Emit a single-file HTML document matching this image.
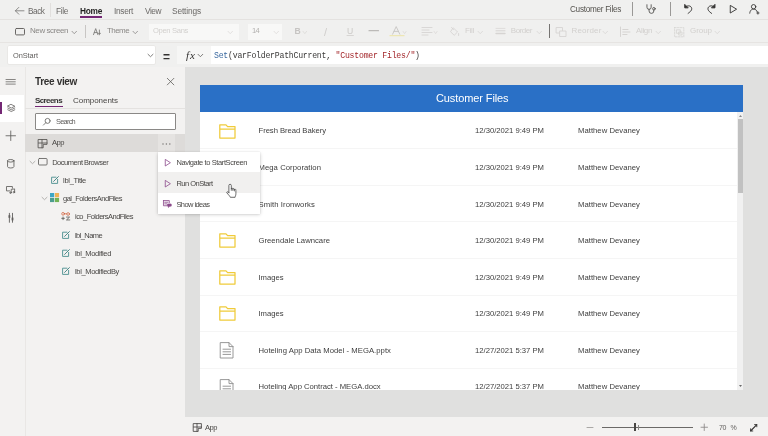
<!DOCTYPE html>
<html lang="en"><head><meta charset="utf-8"><title>Power Apps - Customer Files</title>
<style>
html,body{margin:0;padding:0}
body{width:768px;height:436px;overflow:hidden;position:relative;background:#f3f2f1;filter:opacity(1);font-family:"Liberation Sans",sans-serif}
.t{position:absolute;white-space:pre;line-height:14px;height:14px}
.b{position:absolute}
svg{position:absolute;overflow:visible}
#canvas{position:absolute;left:200.3px;top:84.6px;width:543.2px;height:305px;background:#fff;overflow:hidden}
</style></head><body>
<div class="b" style="left:0px;top:0px;width:768.00px;height:66.60px;background:#f0f0ef;"></div><div class="b" style="left:0px;top:19px;width:768.00px;height:1.00px;background:#e4e2e0;"></div><div class="b" style="left:0px;top:42px;width:768.00px;height:1.00px;background:#e6e4e2;"></div><div class="b" style="left:80px;top:16.2px;width:22.20px;height:1.70px;background:#742774;"></div><div class="b" style="left:50px;top:3px;width:1.00px;height:14.00px;background:#e1dfdd;"></div><div class="b" style="left:84.5px;top:24.5px;width:1.00px;height:13.00px;background:#c8c6c4;"></div><div class="b" style="left:549px;top:23.8px;width:0.90px;height:14.50px;background:#767472;"></div><div class="b" style="left:632.3px;top:2px;width:0.90px;height:14.00px;background:#9a9896;"></div><div class="b" style="left:669.7px;top:2px;width:0.90px;height:14.00px;background:#9a9896;"></div><div class="b" style="left:149px;top:24px;width:90.00px;height:15.50px;background:#f8f8f7;"></div><div class="b" style="left:248px;top:24px;width:33.50px;height:15.50px;background:#f8f8f7;"></div><div class="b" style="left:8px;top:46.2px;width:147.00px;height:17.40px;background:#ffffff;border-radius:1px;box-shadow:0 0 0 .5px #e1dfdd"></div><div class="b" style="left:176.5px;top:46.2px;width:34.00px;height:17.40px;background:#f6f6f5;"></div><div class="b" style="left:210.8px;top:46.2px;width:557.20px;height:17.40px;background:#ffffff;"></div><div class="b" style="left:0px;top:66.6px;width:768.00px;height:369.40px;background:#e0e0df;"></div><div class="b" style="left:0px;top:66.6px;width:25.40px;height:369.40px;background:#f3f2f1;"></div><div class="b" style="left:25.4px;top:66.6px;width:0.80px;height:369.40px;background:#e9e7e5;"></div><div class="b" style="left:26.2px;top:66.6px;width:159.10px;height:369.40px;background:#f3f2f1;"></div><div class="b" style="left:0px;top:95px;width:24.30px;height:26.70px;background:#ffffff;"></div><div class="b" style="left:0px;top:101.8px;width:1.90px;height:12.20px;background:#742774;"></div><div class="b" style="left:35px;top:105.6px;width:28.00px;height:1.80px;background:#742774;"></div><div class="b" style="left:25.3px;top:107.7px;width:160.00px;height:0.80px;background:#e4e2e0;"></div><div class="b" style="left:34.6px;top:112.9px;width:141.10px;height:16.90px;background:#ffffff;box-sizing:border-box;border:1px solid #8a8886;border-radius:1px"></div><div class="b" style="left:25.3px;top:134.2px;width:160.00px;height:17.80px;background:#dddbd9;"></div><div class="b" style="left:158.3px;top:134.2px;width:17.00px;height:17.80px;background:#e5e3e1;"></div><div class="b" style="left:185.3px;top:417px;width:582.70px;height:19.00px;background:#f3f2f1;"></div><div class="b" style="left:602px;top:427px;width:91.00px;height:1.00px;background:#6b6967;"></div><div class="b" style="left:634.4px;top:423.4px;width:2.10px;height:7.40px;background:#484644;"></div><div class="b" style="left:637.6px;top:425.2px;width:0.80px;height:4.40px;background:#8a8886;"></div><span class="t" style='left:28.00px;top:3.80px;font-size:8.3px;color:#6b6967;letter-spacing:-0.488px;'>Back</span><span class="t" style='left:56.00px;top:3.80px;font-size:8.3px;color:#6b6967;letter-spacing:-0.344px;'>File</span><span class="t" style='left:80.00px;top:3.80px;font-size:8.3px;color:#201f1e;letter-spacing:-0.266px;font-weight:700;'>Home</span><span class="t" style='left:114.00px;top:3.80px;font-size:8.3px;color:#6b6967;letter-spacing:-0.294px;'>Insert</span><span class="t" style='left:145.00px;top:3.80px;font-size:8.3px;color:#6b6967;letter-spacing:-0.461px;'>View</span><span class="t" style='left:172.00px;top:3.80px;font-size:8.3px;color:#6b6967;letter-spacing:-0.123px;'>Settings</span><span class="t" style='left:570.00px;top:3.30px;font-size:8.2px;color:#55534f;letter-spacing:-0.290px;'>Customer Files</span><span class="t" style='left:30.00px;top:24.20px;font-size:8px;color:#8a8886;letter-spacing:-0.425px;'>New screen</span><span class="t" style='left:107.00px;top:24.20px;font-size:8px;color:#8a8886;letter-spacing:-0.581px;'>Theme</span><span class="t" style='left:153.00px;top:24.30px;font-size:7.6px;color:#d2d0ce;letter-spacing:-0.333px;'>Open Sans</span><span class="t" style='left:252.00px;top:24.30px;font-size:7.6px;color:#b3b1af;letter-spacing:-0.727px;'>14</span><span class="t" style='left:294.60px;top:24.30px;font-size:8.6px;color:#c6c4c2;letter-spacing:-0.219px;font-weight:700;'>B</span><span class="t" style='left:324.00px;top:24.50px;font-size:11px;color:#d0cecc;letter-spacing:1.538px;'>/</span><span class="t" style='left:347.00px;top:23.70px;font-size:8.6px;color:#cbc9c7;letter-spacing:-0.019px;'>U</span><span class="t" style='left:465.00px;top:24.20px;font-size:8px;color:#d2d0ce;letter-spacing:-0.305px;'>Fill</span><span class="t" style='left:510.80px;top:24.20px;font-size:8px;color:#d2d0ce;letter-spacing:-0.469px;'>Border</span><span class="t" style='left:571.50px;top:24.20px;font-size:8px;color:#d2d0ce;letter-spacing:0.156px;'>Reorder</span><span class="t" style='left:636.00px;top:24.20px;font-size:8px;color:#d2d0ce;letter-spacing:-0.359px;'>Align</span><span class="t" style='left:690.00px;top:24.20px;font-size:8px;color:#d2d0ce;letter-spacing:-0.047px;'>Group</span><span class="t" style='left:13.00px;top:49.00px;font-size:7.4px;color:#605e5c;letter-spacing:-0.067px;'>OnStart</span><span class="t" style='left:163.00px;top:49.60px;font-size:12px;color:#323130;letter-spacing:0.484px;font-weight:700;'>=</span><span class="t" style='left:186.00px;top:48.00px;font-size:11px;color:#323130;letter-spacing:1.023px;font-family:"Liberation Serif", serif;font-style:italic;'>fx</span><span class="t" style='left:35.00px;top:74.50px;font-size:10px;color:#323130;letter-spacing:-0.337px;font-weight:700;'>Tree view</span><span class="t" style='left:35.00px;top:93.50px;font-size:8px;color:#323130;letter-spacing:-0.592px;font-weight:700;'>Screens</span><span class="t" style='left:73.00px;top:93.50px;font-size:8px;color:#484644;letter-spacing:-0.036px;'>Components</span><span class="t" style='left:56.00px;top:114.50px;font-size:7.4px;color:#605e5c;letter-spacing:-0.737px;'>Search</span><span class="t" style='left:52.00px;top:136.30px;font-size:7.6px;color:#484644;letter-spacing:-0.505px;'>App</span><span class="t" style='left:52.20px;top:155.70px;font-size:7.5px;color:#484644;letter-spacing:-0.486px;'>Document Browser</span><span class="t" style='left:63.00px;top:173.50px;font-size:7.5px;color:#484644;letter-spacing:-0.286px;'>lbl_Title</span><span class="t" style='left:63.00px;top:191.50px;font-size:7.5px;color:#484644;letter-spacing:-0.493px;'>gal_FoldersAndFiles</span><span class="t" style='left:75.00px;top:210.40px;font-size:7.5px;color:#484644;letter-spacing:-0.524px;'>ico_FoldersAndFiles</span><span class="t" style='left:75.00px;top:228.50px;font-size:7.5px;color:#484644;letter-spacing:-0.586px;'>lbl_Name</span><span class="t" style='left:75.00px;top:246.50px;font-size:7.5px;color:#484644;letter-spacing:-0.336px;'>lbl_Modified</span><span class="t" style='left:75.00px;top:264.80px;font-size:7.5px;color:#484644;letter-spacing:-0.342px;'>lbl_ModifiedBy</span><span class="t" style='left:205.00px;top:421.00px;font-size:7.5px;color:#484644;letter-spacing:-0.453px;'>App</span><span class="t" style='left:719.00px;top:420.50px;font-size:7px;color:#605e5c;letter-spacing:-0.398px;'>70</span><span class="t" style='left:730.50px;top:420.50px;font-size:7px;color:#605e5c;letter-spacing:-0.734px;'>%</span><svg style="left:14.6px;top:7px" width="9.2" height="7.6" viewBox="0 0 9.2 7.6" fill="none" stroke="#7a7876" stroke-width="0.85" stroke-linecap="round" stroke-linejoin="round"><path d="M3.8 0.4 L0.4 3.8 L3.8 7.2 M0.4 3.8 H9"/></svg><svg style="left:15px;top:28px" width="10" height="7.4" viewBox="0 0 10 7.4" fill="none" stroke="#605e5c" stroke-width="0.95" stroke-linecap="round" stroke-linejoin="round"><rect x="0.5" y="0.5" width="9" height="6.4" rx="1"/></svg><svg style="left:72px;top:30.5px" width="4.5" height="3" viewBox="0 0 4.5 3" fill="none" stroke="#8a8886" stroke-width="0.8" stroke-linecap="round" stroke-linejoin="round"><path d="M0 0.3 L2.25 2.7 L4.5 0.3"/></svg><svg style="left:93px;top:27.6px" width="7.6" height="7.2" viewBox="0 0 7.6 7.2" fill="none" stroke="#7a7876" stroke-width="0.85" stroke-linecap="round" stroke-linejoin="round"><path d="M0.5 6.7 L2.7 0.6 L4.9 6.7 M1.3 4.6 H4.1" /><path d="M6.4 2 V6.8 M5.5 5.4 h1.9" /></svg><svg style="left:133px;top:30.5px" width="4.5" height="3" viewBox="0 0 4.5 3" fill="none" stroke="#8a8886" stroke-width="0.8" stroke-linecap="round" stroke-linejoin="round"><path d="M0 0.3 L2.25 2.7 L4.5 0.3"/></svg><svg style="left:228px;top:30.5px" width="4.5" height="3" viewBox="0 0 4.5 3" fill="none" stroke="#dddbd9" stroke-width="0.8" stroke-linecap="round" stroke-linejoin="round"><path d="M0 0.3 L2.25 2.7 L4.5 0.3"/></svg><svg style="left:273.5px;top:30.5px" width="4.5" height="3" viewBox="0 0 4.5 3" fill="none" stroke="#dddbd9" stroke-width="0.8" stroke-linecap="round" stroke-linejoin="round"><path d="M0 0.3 L2.25 2.7 L4.5 0.3"/></svg><svg style="left:303px;top:30.5px" width="3.6" height="3" viewBox="0 0 3.6 3" fill="none" stroke="#dcdad8" stroke-width="0.8" stroke-linecap="round" stroke-linejoin="round"><path d="M0 0.3 L1.8 2.7 L3.6 0.3"/></svg><svg style="left:368.5px;top:30.4px" width="9.5" height="1.3" viewBox="0 0 9.5 1.3" fill="none" stroke="#bcbab8" stroke-width="1.2" stroke-linecap="round" stroke-linejoin="round"><path d="M0 0.65 H9.5"/></svg><svg style="left:347px;top:35.2px" width="6.4" height="1" viewBox="0 0 6.4 1" fill="none" stroke="#d0cecc" stroke-width="0.8" stroke-linecap="round" stroke-linejoin="round"><path d="M0 0.5 H6.4"/></svg><svg style="left:392.4px;top:25.8px" width="8.4" height="8.6" viewBox="0 0 8.4 8.6" fill="none" stroke="#c6c4c2" stroke-width="0.9" stroke-linecap="round" stroke-linejoin="round"><path d="M0.6 8.2 L4.2 0.6 L7.8 8.2 M2 5.4 H6.4"/></svg><svg style="left:390px;top:35px" width="14" height="1.5" viewBox="0 0 14 1.5" fill="none" stroke="#ede6b4" stroke-width="1.3" stroke-linecap="round" stroke-linejoin="round"><path d="M0 0.7 H14"/></svg><svg style="left:403px;top:31.0px" width="3.2" height="3" viewBox="0 0 3.2 3" fill="none" stroke="#dddbd9" stroke-width="0.8" stroke-linecap="round" stroke-linejoin="round"><path d="M0 0.3 L1.6 2.7 L3.2 0.3"/></svg><svg style="left:421.5px;top:27px" width="10" height="8.5" viewBox="0 0 10 8.5" fill="none" stroke="#d6d4d2" stroke-width="0.9" stroke-linecap="round" stroke-linejoin="round"><path d="M0 0.5 H10 M0 3 H7 M0 5.5 H10 M0 8 H6"/></svg><svg style="left:433.5px;top:30.5px" width="3.2" height="3" viewBox="0 0 3.2 3" fill="none" stroke="#dddbd9" stroke-width="0.8" stroke-linecap="round" stroke-linejoin="round"><path d="M0 0.3 L1.6 2.7 L3.2 0.3"/></svg><svg style="left:450px;top:26.5px" width="9.5" height="9.5" viewBox="0 0 9.5 9.5" fill="none" stroke="#d6d4d2" stroke-width="0.9" stroke-linecap="round" stroke-linejoin="round"><path d="M3.5 1 L7.5 5 L4.2 8.3 L0.8 5 Z M1.5 0.5 L3.5 2.5 M8.6 6.5 v2"/></svg><svg style="left:477.5px;top:30.5px" width="4.5" height="3" viewBox="0 0 4.5 3" fill="none" stroke="#d8d6d4" stroke-width="0.8" stroke-linecap="round" stroke-linejoin="round"><path d="M0 0.3 L2.25 2.7 L4.5 0.3"/></svg><svg style="left:495.6px;top:28px" width="9" height="6.4" viewBox="0 0 9 6.4" fill="none" stroke="#d6d4d2" stroke-width="1" stroke-linecap="round" stroke-linejoin="round"><path d="M0 0.4 H9" stroke-width="0.7"/><path d="M0 2.8 H9" stroke-width="1"/><path d="M0 5.5 H9" stroke-width="1.4"/></svg><svg style="left:536.5px;top:30.5px" width="4.5" height="3" viewBox="0 0 4.5 3" fill="none" stroke="#d8d6d4" stroke-width="0.8" stroke-linecap="round" stroke-linejoin="round"><path d="M0 0.3 L2.25 2.7 L4.5 0.3"/></svg><svg style="left:556px;top:27px" width="10.5" height="10" viewBox="0 0 10.5 10" fill="none" stroke="#d6d4d2" stroke-width="0.9" stroke-linecap="round" stroke-linejoin="round"><rect x="0.5" y="0.5" width="6" height="5.5"/><rect x="4" y="4" width="6" height="5.5" fill="#f0f0ef"/></svg><svg style="left:603px;top:30.5px" width="4.5" height="3" viewBox="0 0 4.5 3" fill="none" stroke="#d8d6d4" stroke-width="0.8" stroke-linecap="round" stroke-linejoin="round"><path d="M0 0.3 L2.25 2.7 L4.5 0.3"/></svg><svg style="left:619.5px;top:27px" width="10.5" height="9.5" viewBox="0 0 10.5 9.5" fill="none" stroke="#d6d4d2" stroke-width="1" stroke-linecap="round" stroke-linejoin="round"><path d="M0.5 0 V9.5 M2.8 2.5 H8 M2.8 5 H10 M2.8 7.5 H7"/></svg><svg style="left:655.5px;top:30.5px" width="4.5" height="3" viewBox="0 0 4.5 3" fill="none" stroke="#d8d6d4" stroke-width="0.8" stroke-linecap="round" stroke-linejoin="round"><path d="M0 0.3 L2.25 2.7 L4.5 0.3"/></svg><svg style="left:674px;top:26.5px" width="10.5" height="10.5" viewBox="0 0 10.5 10.5" fill="none" stroke="#d6d4d2" stroke-width="0.8" stroke-linecap="round" stroke-linejoin="round"><rect x="0.6" y="0.6" width="9.2" height="9.2" stroke-dasharray="1.6 1.2"/><rect x="2.8" y="2.8" width="3.5" height="3.5"/><rect x="5" y="5" width="3" height="3"/></svg><svg style="left:714.5px;top:30.5px" width="4.5" height="3" viewBox="0 0 4.5 3" fill="none" stroke="#d8d6d4" stroke-width="0.8" stroke-linecap="round" stroke-linejoin="round"><path d="M0 0.3 L2.25 2.7 L4.5 0.3"/></svg><svg style="left:645.5px;top:4px" width="10.6" height="10.1" viewBox="0 0 11.5 11" fill="none" stroke="#484644" stroke-width="0.9" stroke-linecap="round" stroke-linejoin="round"><path d="M1 0.8 V3.5 a2.3 2.3 0 0 0 4.6 0 V0.8 M3.3 5.9 V7.6 a2.6 2.6 0 0 0 5.2 0 V6.6"/><circle cx="8.6" cy="5.2" r="1.4"/></svg><svg style="left:683.5px;top:4px" width="8.7" height="10.1" viewBox="0 0 9.5 11" fill="none" stroke="#323130" stroke-width="1.05" stroke-linecap="round" stroke-linejoin="round"><path d="M0.8 0.8 V4.2 H4.2 Z" fill="#323130"/><path d="M1.6 3.4 C3.4 1.4 7 1.4 8.2 4 C9.2 6.5 7 8.5 4.5 10.2"/></svg><svg style="left:706.8px;top:4px" width="8.7" height="10.1" viewBox="0 0 9.5 11" fill="none" stroke="#323130" stroke-width="1.05" stroke-linecap="round" stroke-linejoin="round"><path d="M8.7 0.8 V4.2 H5.3 Z" fill="#323130"/><path d="M7.9 3.4 C6.1 1.4 2.5 1.4 1.3 4 C0.3 6.5 2.5 8.5 5 10.2"/></svg><svg style="left:729.5px;top:4.8px" width="7.2" height="8.4" viewBox="0 0 7.5 8.8" fill="none" stroke="#323130" stroke-width="0.95" stroke-linecap="round" stroke-linejoin="round"><path d="M0.6 0.6 L6.9 4.4 L0.6 8.2 Z"/></svg><svg style="left:749px;top:4px" width="10.6" height="10.1" viewBox="0 0 11.5 11" fill="none" stroke="#323130" stroke-width="0.95" stroke-linecap="round" stroke-linejoin="round"><circle cx="5" cy="3" r="2.4"/><path d="M0.8 10 C1.2 6.5 3 5.6 5 5.6 C7 5.6 8.3 6.6 8.9 8.4 M9.7 8.6 v2.4 M8.5 9.8 h2.4"/></svg><svg style="left:148px;top:54.1px" width="5" height="3" viewBox="0 0 5 3" fill="none" stroke="#605e5c" stroke-width="0.8" stroke-linecap="round" stroke-linejoin="round"><path d="M0 0.3 L2.5 2.7 L5 0.3"/></svg><svg style="left:198.3px;top:53.7px" width="4.8" height="3" viewBox="0 0 4.8 3" fill="none" stroke="#605e5c" stroke-width="0.8" stroke-linecap="round" stroke-linejoin="round"><path d="M0 0.3 L2.4 2.7 L4.8 0.3"/></svg><svg style="left:6.3px;top:79px" width="9.3" height="5.6" viewBox="0 0 9.3 5.6" fill="none" stroke="#605e5c" stroke-width="0.75" stroke-linecap="round" stroke-linejoin="round"><path d="M0 0.5 H9.3 M0 2.8 H9.3 M0 5.1 H9.3"/></svg><svg style="left:6.6px;top:104.3px" width="8.6" height="8" viewBox="0 0 10 10" fill="none" stroke="#484644" stroke-width="0.85" stroke-linecap="round" stroke-linejoin="round"><path d="M5 0.6 L9.4 2.8 L5 5 L0.6 2.8 Z M0.6 5 L5 7.2 L9.4 5 M0.6 7.2 L5 9.4 L9.4 7.2"/></svg><svg style="left:6px;top:130.5px" width="9.5" height="9.5" viewBox="0 0 9.5 9.5" fill="none" stroke="#605e5c" stroke-width="0.85" stroke-linecap="round" stroke-linejoin="round"><path d="M4.75 0 V9.5 M0 4.75 H9.5"/></svg><svg style="left:7px;top:158.5px" width="7.5" height="9.5" viewBox="0 0 7.5 9.5" fill="none" stroke="#605e5c" stroke-width="0.85" stroke-linecap="round" stroke-linejoin="round"><ellipse cx="3.75" cy="1.8" rx="3.2" ry="1.3"/><path d="M0.55 1.8 V7.6 a3.2 1.4 0 0 0 6.4 0 V1.8"/></svg><svg style="left:6.2px;top:186.2px" width="9.6" height="8" viewBox="0 0 9.6 8" fill="none" stroke="#605e5c" stroke-width="0.85" stroke-linecap="round" stroke-linejoin="round"><path d="M3.6 4.9 H0.5 V0.5 H6.4 V2.2"/><path d="M5.2 6.6 V3.4 L8.6 2.9 V6.1"/><circle cx="4.5" cy="6.7" r="0.75"/><circle cx="7.9" cy="6.2" r="0.75"/></svg><svg style="left:8px;top:212.6px" width="6" height="9.6" viewBox="0 0 6 9.6" fill="none" stroke="#605e5c" stroke-width="0.85" stroke-linecap="round" stroke-linejoin="round"><path d="M1.4 0.3 V9.3 M4.5 0.3 V9.3" stroke-width="0.9"/><rect x="0.5" y="2.2" width="1.8" height="2.6" fill="#605e5c" stroke="none"/><rect x="3.6" y="4.6" width="1.8" height="2.8" fill="#605e5c" stroke="none"/></svg><svg style="left:166.8px;top:78.3px" width="7.2" height="7.2" viewBox="0 0 7.2 7.2" fill="none" stroke="#605e5c" stroke-width="0.8" stroke-linecap="round" stroke-linejoin="round"><path d="M0.3 0.3 L6.9 6.9 M6.9 0.3 L0.3 6.9"/></svg><svg style="left:43px;top:118.2px" width="7.5" height="7.5" viewBox="0 0 7.5 7.5" fill="none" stroke="#605e5c" stroke-width="0.8" stroke-linecap="round" stroke-linejoin="round"><circle cx="4.6" cy="2.9" r="2.5"/><path d="M2.8 4.7 L0.4 7.1"/></svg><svg style="left:162.3px;top:142.6px" width="9" height="2" viewBox="0 0 9 2" fill="#7a7876" stroke="none" stroke-width="1" stroke-linecap="round" stroke-linejoin="round"><circle cx="1" cy="1" r="0.75"/><circle cx="4.4" cy="1" r="0.75"/><circle cx="7.8" cy="1" r="0.75"/></svg><svg style="left:38px;top:139px" width="9.5" height="9.5" viewBox="0 0 9.5 9.5" fill="none" stroke="#565452" stroke-width="0.85" stroke-linecap="round" stroke-linejoin="round"><path d="M0.5 0.5 H9 V5.4 H5.2 V8.8 H0.5 Z M0.5 4 H9 M4 0.5 V8.8"/></svg><svg style="left:30px;top:160.5px" width="5" height="3" viewBox="0 0 5 3" fill="none" stroke="#a19f9d" stroke-width="0.8" stroke-linecap="round" stroke-linejoin="round"><path d="M0 0.3 L2.5 2.7 L5 0.3"/></svg><svg style="left:38px;top:158.2px" width="9.6" height="7.6" viewBox="0 0 9.6 7.6" fill="none" stroke="#605e5c" stroke-width="0.85" stroke-linecap="round" stroke-linejoin="round"><rect x="0.5" y="0.5" width="8.6" height="6.5" rx="1"/></svg><svg style="left:41.5px;top:196.9px" width="5" height="3" viewBox="0 0 5 3" fill="none" stroke="#a19f9d" stroke-width="0.8" stroke-linecap="round" stroke-linejoin="round"><path d="M0 0.3 L2.5 2.7 L5 0.3"/></svg><svg style="left:50.8px;top:176.3px" width="8" height="8" viewBox="0 0 8 8" fill="none" stroke="#605e5c" stroke-width="0.9" stroke-linecap="round" stroke-linejoin="round"><path d="M5 1.2 H0.6 V7.4 H6.6 V3.4" stroke="#4a8f8f"/><path d="M2.6 5.4 L7.4 0.6" stroke="#3b7d7d"/></svg><svg style="left:61.8px;top:231px" width="8" height="8" viewBox="0 0 8 8" fill="none" stroke="#605e5c" stroke-width="0.9" stroke-linecap="round" stroke-linejoin="round"><path d="M5 1.2 H0.6 V7.4 H6.6 V3.4" stroke="#4a8f8f"/><path d="M2.6 5.4 L7.4 0.6" stroke="#3b7d7d"/></svg><svg style="left:61.8px;top:249.2px" width="8" height="8" viewBox="0 0 8 8" fill="none" stroke="#605e5c" stroke-width="0.9" stroke-linecap="round" stroke-linejoin="round"><path d="M5 1.2 H0.6 V7.4 H6.6 V3.4" stroke="#4a8f8f"/><path d="M2.6 5.4 L7.4 0.6" stroke="#3b7d7d"/></svg><svg style="left:61.8px;top:267.4px" width="8" height="8" viewBox="0 0 8 8" fill="none" stroke="#605e5c" stroke-width="0.9" stroke-linecap="round" stroke-linejoin="round"><path d="M5 1.2 H0.6 V7.4 H6.6 V3.4" stroke="#4a8f8f"/><path d="M2.6 5.4 L7.4 0.6" stroke="#3b7d7d"/></svg><svg style="left:49.8px;top:193.2px" width="9.2" height="9.2" viewBox="0 0 9.2 9.2" fill="none" stroke="none" stroke-width="1" stroke-linecap="round" stroke-linejoin="round"><rect x="0" y="0" width="4.2" height="4.2" fill="#3fa7c4"/><rect x="4.9" y="0" width="4.2" height="4.2" fill="#f0b355"/><rect x="0" y="4.9" width="4.2" height="4.2" fill="#4d9d8e"/><rect x="4.9" y="4.9" width="4.2" height="4.2" fill="#72b356"/></svg><svg style="left:61px;top:212.2px" width="10" height="8.6" viewBox="0 0 10.5 9.5" fill="none" stroke="#605e5c" stroke-width="0.8" stroke-linecap="round" stroke-linejoin="round"><circle cx="2" cy="2" r="1.5" stroke="#d0603a"/><circle cx="7.6" cy="2.2" r="1.5" stroke="#d0603a"/><path d="M3.5 2 H6" stroke="#d0603a"/><path d="M0.5 7 h3 M2 5.5 v3" stroke="#484644"/><path d="M5.8 5.6 h3.4 l-3.4 3.2 h3.6" stroke="#484644"/></svg><svg style="left:192.5px;top:423px" width="9" height="9" viewBox="0 0 9 9" fill="none" stroke="#484644" stroke-width="0.85" stroke-linecap="round" stroke-linejoin="round"><path d="M0.6 0.6 H8.4 V5.4 H5.2 V8.4 H0.6 Z M0.6 4 H8.4 M4 0.6 V8.4"/></svg><svg style="left:587px;top:427px" width="6" height="1" viewBox="0 0 6 1" fill="none" stroke="#a19f9d" stroke-width="0.9" stroke-linecap="round" stroke-linejoin="round"><path d="M0 0.5 H6"/></svg><svg style="left:700.5px;top:424.3px" width="6.5" height="6.5" viewBox="0 0 6.5 6.5" fill="none" stroke="#8a8886" stroke-width="0.85" stroke-linecap="round" stroke-linejoin="round"><path d="M3.25 0 V6.5 M0 3.25 H6.5"/></svg><svg style="left:749.6px;top:423.8px" width="7.4" height="7.6" viewBox="0 0 7.4 7.6" fill="none" stroke="#323130" stroke-width="0.9" stroke-linecap="round" stroke-linejoin="round"><path d="M0.6 7 L6.8 0.6" stroke-width="1.1"/><path d="M4.6 0.6 H6.8 V2.8 M0.6 4.8 V7 H2.8"/></svg><div id="canvas"><div class="b" style="left:0;top:0;width:544px;height:27.5px;background:#2a70c6"></div><div class="b" style="left:537px;top:27.5px;width:6.2px;height:278px;background:#f1f1f1"></div><div class="b" style="left:537.9px;top:34.4px;width:4.5px;height:74px;background:#c1c1c1"></div><svg style="left:538.7px;top:30.2px" width="3" height="2" viewBox="0 0 3 2"><path d="M0 2 L1.5 0 L3 2 Z" fill="#8a8a8a"/></svg><svg style="left:538.7px;top:300.6px" width="3" height="2" viewBox="0 0 3 2"><path d="M0 0 L1.5 2 L3 0 Z" fill="#6a6a6a"/></svg><span class="t" style='left:235.70px;top:6.90px;font-size:11px;color:#ffffff;letter-spacing:-0.105px;'>Customer Files</span><span class="t" style='left:58.20px;top:39.88px;font-size:7.7px;color:#3d3d3d;letter-spacing:-0.049px;'>Fresh Bread Bakery</span><span class="t" style='left:274.70px;top:39.88px;font-size:7.7px;color:#3d3d3d;letter-spacing:-0.014px;'>12/30/2021 9:49 PM</span><span class="t" style='left:377.70px;top:39.88px;font-size:7.7px;color:#3d3d3d;letter-spacing:0.031px;'>Matthew Devaney</span><span class="t" style='left:58.20px;top:76.43px;font-size:7.7px;color:#3d3d3d;letter-spacing:0.060px;'>Mega Corporation</span><span class="t" style='left:274.70px;top:76.43px;font-size:7.7px;color:#3d3d3d;letter-spacing:-0.014px;'>12/30/2021 9:49 PM</span><span class="t" style='left:377.70px;top:76.43px;font-size:7.7px;color:#3d3d3d;letter-spacing:0.031px;'>Matthew Devaney</span><span class="t" style='left:58.20px;top:112.97px;font-size:7.7px;color:#3d3d3d;letter-spacing:0.093px;'>Smith Ironworks</span><span class="t" style='left:274.70px;top:112.97px;font-size:7.7px;color:#3d3d3d;letter-spacing:-0.014px;'>12/30/2021 9:49 PM</span><span class="t" style='left:377.70px;top:112.97px;font-size:7.7px;color:#3d3d3d;letter-spacing:0.031px;'>Matthew Devaney</span><span class="t" style='left:58.20px;top:149.53px;font-size:7.7px;color:#3d3d3d;letter-spacing:0.007px;'>Greendale Lawncare</span><span class="t" style='left:274.70px;top:149.53px;font-size:7.7px;color:#3d3d3d;letter-spacing:-0.014px;'>12/30/2021 9:49 PM</span><span class="t" style='left:377.70px;top:149.53px;font-size:7.7px;color:#3d3d3d;letter-spacing:0.031px;'>Matthew Devaney</span><span class="t" style='left:58.20px;top:186.08px;font-size:7.7px;color:#3d3d3d;letter-spacing:-0.036px;'>Images</span><span class="t" style='left:274.70px;top:186.08px;font-size:7.7px;color:#3d3d3d;letter-spacing:-0.014px;'>12/30/2021 9:49 PM</span><span class="t" style='left:377.70px;top:186.08px;font-size:7.7px;color:#3d3d3d;letter-spacing:0.031px;'>Matthew Devaney</span><span class="t" style='left:58.20px;top:222.62px;font-size:7.7px;color:#3d3d3d;letter-spacing:-0.036px;'>Images</span><span class="t" style='left:274.70px;top:222.62px;font-size:7.7px;color:#3d3d3d;letter-spacing:-0.014px;'>12/30/2021 9:49 PM</span><span class="t" style='left:377.70px;top:222.62px;font-size:7.7px;color:#3d3d3d;letter-spacing:0.031px;'>Matthew Devaney</span><span class="t" style='left:58.20px;top:259.17px;font-size:7.7px;color:#3d3d3d;letter-spacing:0.037px;'>Hoteling App Data Model - MEGA.pptx</span><span class="t" style='left:274.70px;top:259.17px;font-size:7.7px;color:#3d3d3d;letter-spacing:-0.014px;'>12/27/2021 5:37 PM</span><span class="t" style='left:377.70px;top:259.17px;font-size:7.7px;color:#3d3d3d;letter-spacing:0.031px;'>Matthew Devaney</span><span class="t" style='left:58.20px;top:295.73px;font-size:7.7px;color:#3d3d3d;letter-spacing:-0.016px;'>Hoteling App Contract - MEGA.docx</span><span class="t" style='left:274.70px;top:295.73px;font-size:7.7px;color:#3d3d3d;letter-spacing:-0.014px;'>12/27/2021 5:37 PM</span><span class="t" style='left:377.70px;top:295.73px;font-size:7.7px;color:#3d3d3d;letter-spacing:0.031px;'>Matthew Devaney</span><svg style="left:19px;top:38.97500000000001px" width="17" height="15" viewBox="0 0 17 15" fill="none" stroke="#f0cb3a" stroke-width="1.25" stroke-linecap="round" stroke-linejoin="round"><path d="M0.8 14 V0.8 H7 L8.6 2.6 H16 V14 Z M0.8 5 H16"/></svg><div class="b" style="left:0;top:63.75px;width:537px;height:0.8px;background:#f5f5f5"></div><svg style="left:19px;top:75.525px" width="17" height="15" viewBox="0 0 17 15" fill="none" stroke="#f0cb3a" stroke-width="1.25" stroke-linecap="round" stroke-linejoin="round"><path d="M0.8 14 V0.8 H7 L8.6 2.6 H16 V14 Z M0.8 5 H16"/></svg><div class="b" style="left:0;top:100.30px;width:537px;height:0.8px;background:#f5f5f5"></div><svg style="left:19px;top:112.07499999999999px" width="17" height="15" viewBox="0 0 17 15" fill="none" stroke="#f0cb3a" stroke-width="1.25" stroke-linecap="round" stroke-linejoin="round"><path d="M0.8 14 V0.8 H7 L8.6 2.6 H16 V14 Z M0.8 5 H16"/></svg><div class="b" style="left:0;top:136.85px;width:537px;height:0.8px;background:#f5f5f5"></div><svg style="left:19px;top:148.625px" width="17" height="15" viewBox="0 0 17 15" fill="none" stroke="#f0cb3a" stroke-width="1.25" stroke-linecap="round" stroke-linejoin="round"><path d="M0.8 14 V0.8 H7 L8.6 2.6 H16 V14 Z M0.8 5 H16"/></svg><div class="b" style="left:0;top:173.40px;width:537px;height:0.8px;background:#f5f5f5"></div><svg style="left:19px;top:185.175px" width="17" height="15" viewBox="0 0 17 15" fill="none" stroke="#f0cb3a" stroke-width="1.25" stroke-linecap="round" stroke-linejoin="round"><path d="M0.8 14 V0.8 H7 L8.6 2.6 H16 V14 Z M0.8 5 H16"/></svg><div class="b" style="left:0;top:209.95px;width:537px;height:0.8px;background:#f5f5f5"></div><svg style="left:19px;top:221.72500000000002px" width="17" height="15" viewBox="0 0 17 15" fill="none" stroke="#f0cb3a" stroke-width="1.25" stroke-linecap="round" stroke-linejoin="round"><path d="M0.8 14 V0.8 H7 L8.6 2.6 H16 V14 Z M0.8 5 H16"/></svg><div class="b" style="left:0;top:246.50px;width:537px;height:0.8px;background:#f5f5f5"></div><svg style="left:19.9px;top:257.57499999999993px" width="14" height="17" viewBox="0 0 14 17" fill="none" stroke="#8c8c8c" stroke-width="0.9" stroke-linecap="round" stroke-linejoin="round"><path d="M0.6 0.6 H9 L13 4.6 V16 H0.6 Z M9 0.6 V4.6 H13 M3 7.2 H10.6 M3 9.8 H10.6 M3 12.4 H10.6"/></svg><div class="b" style="left:0;top:283.05px;width:537px;height:0.8px;background:#f5f5f5"></div><svg style="left:19.9px;top:294.12499999999994px" width="14" height="17" viewBox="0 0 14 17" fill="none" stroke="#8c8c8c" stroke-width="0.9" stroke-linecap="round" stroke-linejoin="round"><path d="M0.6 0.6 H9 L13 4.6 V16 H0.6 Z M9 0.6 V4.6 H13 M3 7.2 H10.6 M3 9.8 H10.6 M3 12.4 H10.6"/></svg></div><div class="b" style="left:157.9px;top:152.2px;width:102.2px;height:61.5px;background:#fff;box-shadow:0 1.3px 3.6px rgba(0,0,0,.22),0 0 1px rgba(0,0,0,.12)"></div><div class="b" style="left:157.9px;top:172.2px;width:102.2px;height:21.2px;background:#f1f0ef"></div><svg style="left:164.6px;top:159.4px" width="6" height="7.4" viewBox="0 0 6 7.4" fill="none" stroke="#8b4a8b" stroke-width="0.8" stroke-linecap="round" stroke-linejoin="round"><path d="M0.6 0.6 L5.4 3.7 L0.6 6.8 Z"/></svg><svg style="left:164.6px;top:180.1px" width="6" height="7.4" viewBox="0 0 6 7.4" fill="none" stroke="#8b4a8b" stroke-width="0.8" stroke-linecap="round" stroke-linejoin="round"><path d="M0.6 0.6 L5.4 3.7 L0.6 6.8 Z"/></svg><svg style="left:162.6px;top:199.8px" width="8.8" height="7.9" viewBox="0 0 9.5 8.5" fill="none" stroke="#8b4a8b" stroke-width="0.9" stroke-linecap="round" stroke-linejoin="round"><path d="M0.5 0.6 H6.8 V3 M0.5 0.6 V6.2 H4.2 M1.8 2.4 H5.4 M1.8 4.2 H4" /><path d="M5.2 4.4 H8.8 V6.6 H7 L6 8 V6.6 H5.2 Z" fill="#8b4a8b"/></svg><span class="t" style='left:176.40px;top:156.10px;font-size:7.5px;color:#484644;letter-spacing:-0.393px;'>Navigate to StartScreen</span><span class="t" style='left:176.40px;top:176.90px;font-size:7.5px;color:#484644;letter-spacing:-0.508px;'>Run OnStart</span><span class="t" style='left:176.40px;top:198.10px;font-size:7.5px;color:#484644;letter-spacing:-0.568px;'>Show ideas</span><svg style="left:225.5px;top:183.7px" width="10.8" height="13.9" viewBox="0 0 10.8 13.9" fill="none" stroke="#3a3a3a" stroke-width="0.75" stroke-linecap="round" stroke-linejoin="round"><path d="M2.9 8.6 V1.5 a1.2 1.2 0 0 1 2.4 0 V4.9 a0.8 0.8 0 0 1 1.6 0.3 a0.75 0.75 0 0 1 1.5 0.5 a0.8 0.8 0 0 1 1.5 0.8 V9.6 C9.9 11.4 9.3 12 9.1 13.3 H4.3 C3.9 12 2.4 10.8 0.9 8.9 C0.3 8 1.5 7 2.9 8.6 Z" fill="#fff"/><path d="M5.3 4.9 V6.3 M6.9 5.2 V6.5 M8.4 5.7 V6.9"/></svg><span class="t" style='left:214px;top:48.9px;font-size:8.2px;font-family:"Liberation Mono",monospace;letter-spacing:-0.238px;color:#3b3a39'><span style="color:#3c6aa0">Set</span>(varFolderPathCurrent, <span style="color:#a3262a">&quot;Customer Files/&quot;</span>)</span>
</body></html>
